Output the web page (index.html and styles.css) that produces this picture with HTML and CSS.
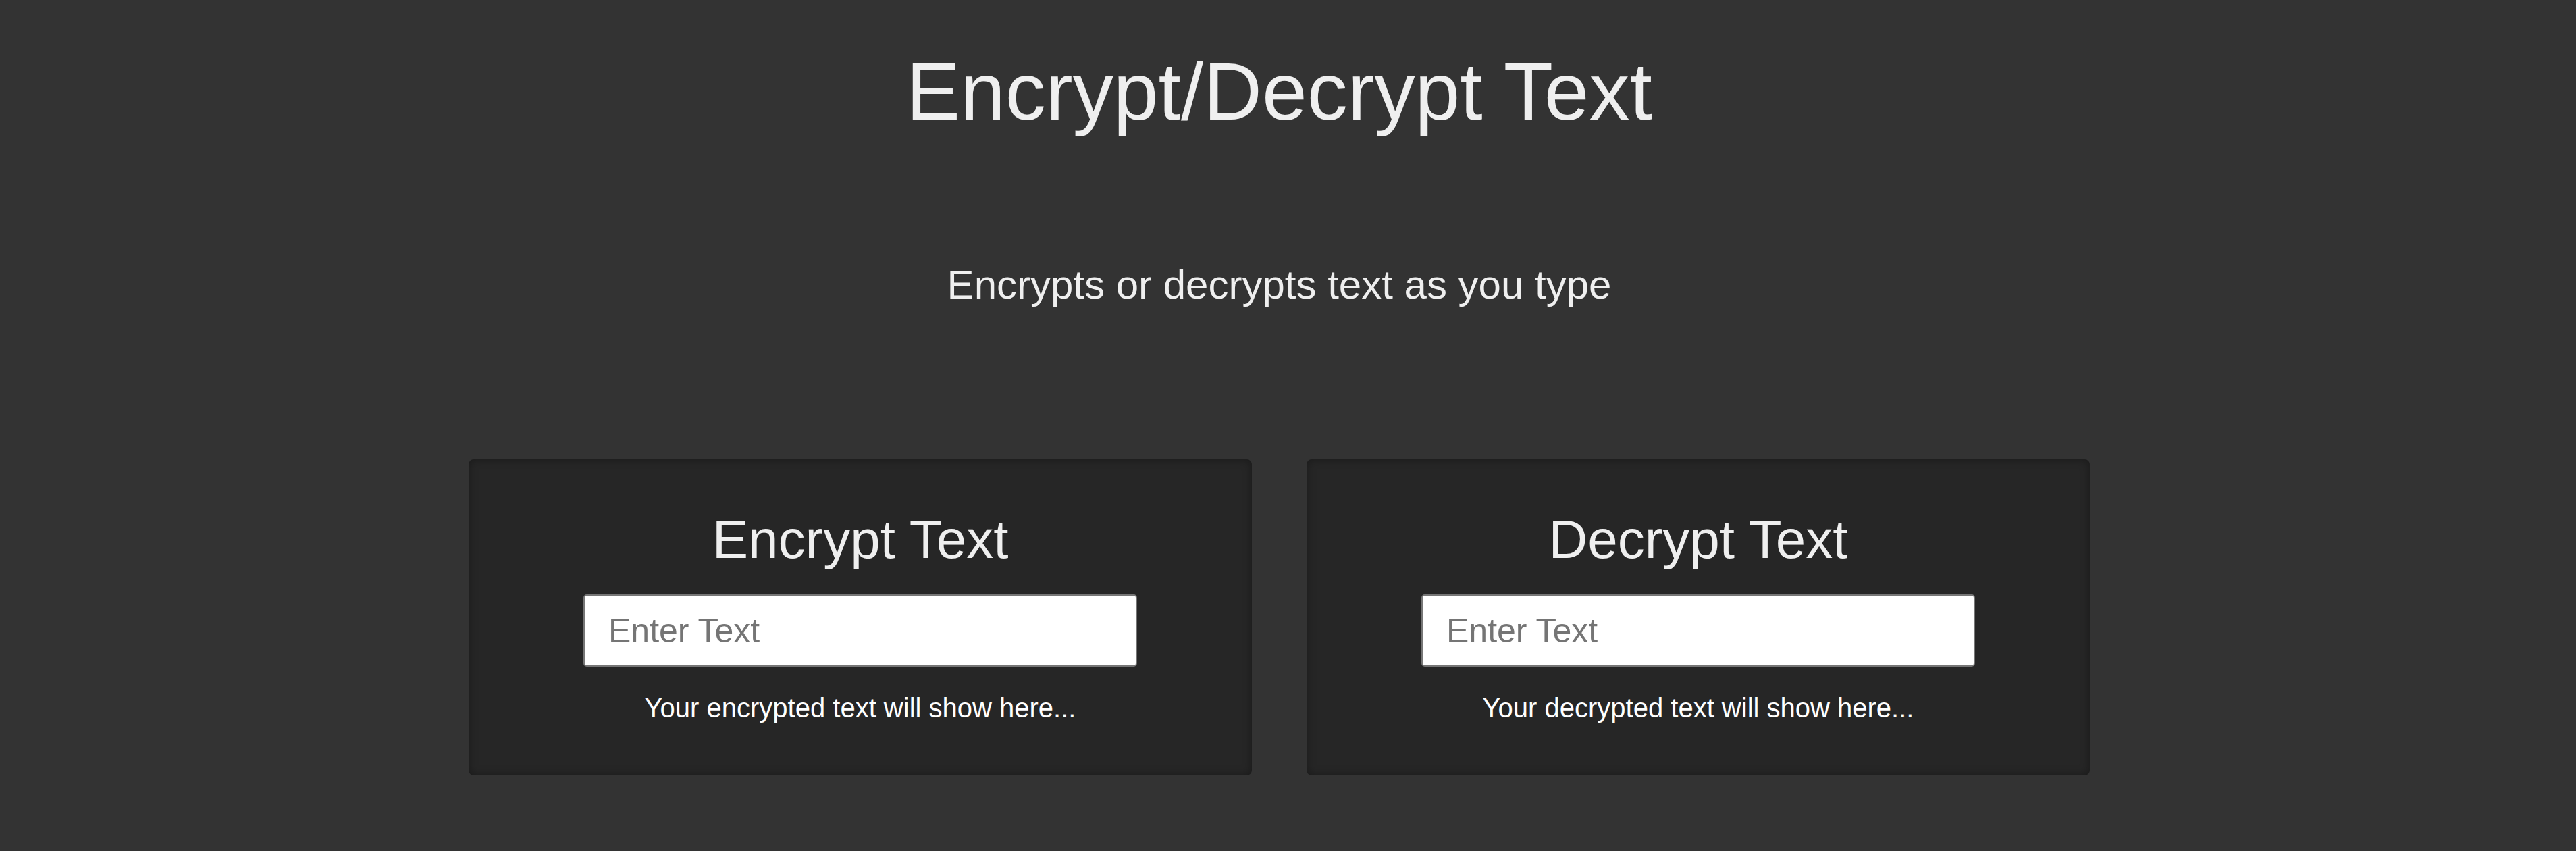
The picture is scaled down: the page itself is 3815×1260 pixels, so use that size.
FILE: index.html
```html
<!DOCTYPE html>
<html lang="en">
<head>
<meta charset="utf-8">
<title>Encrypt/Decrypt Text</title>
<link rel="stylesheet" href="styles.css">
</head>
<body>
<div class="page">
  <h1 class="title">Encrypt/Decrypt Text</h1>
  <p class="subtitle">Encrypts or decrypts text as you type</p>
  <div class="cards">
    <section class="card">
      <h2 class="card-title">Encrypt Text</h2>
      <input class="text-input" type="text" placeholder="Enter Text">
      <p class="output">Your encrypted text will show here...</p>
    </section>
    <section class="card">
      <h2 class="card-title">Decrypt Text</h2>
      <input class="text-input" type="text" placeholder="Enter Text">
      <p class="output">Your decrypted text will show here...</p>
    </section>
  </div>
</div>
</body>
</html>
```
FILE: styles.css
```css
html, body {
  margin: 0;
  padding: 0;
  background: #333333;
}
body {
  font-family: "Liberation Sans", Arial, sans-serif;
  color: #efefef;
}
.page {
  width: calc(100% - 26px);
  text-align: center;
}
.title {
  margin: 66px 0 0;
  font-size: 120px;
  line-height: 139px;
  font-weight: normal;
  color: #efefef;
}
.subtitle {
  margin: 182px 0 0;
  font-size: 60px;
  line-height: 70px;
  color: #efefef;
}
.cards {
  margin-top: 223px;
  display: flex;
  justify-content: center;
  gap: 81px;
}
.card {
  width: 1160px;
  box-sizing: border-box;
  padding: 73px 0 77px;
  background: #262626;
  border-radius: 8px;
  box-shadow: inset 0 0 14px rgba(0, 0, 0, 0.35);
  display: flex;
  flex-direction: column;
  align-items: center;
}
.card-title {
  margin: 0;
  font-size: 80px;
  line-height: 92px;
  font-weight: normal;
  color: #efefef;
}
.text-input {
  margin-top: 35px;
  width: 820px;
  height: 107px;
  box-sizing: border-box;
  border: 2px solid #767676;
  border-radius: 5px;
  background: #ffffff;
  padding: 0 35px;
  font-family: "Liberation Sans", Arial, sans-serif;
  font-size: 50px;
  color: #222;
  outline: none;
}
.text-input::placeholder {
  color: #757575;
}
.output {
  margin: 39px 0 0;
  font-size: 40px;
  line-height: 45px;
  color: #ffffff;
}
```
